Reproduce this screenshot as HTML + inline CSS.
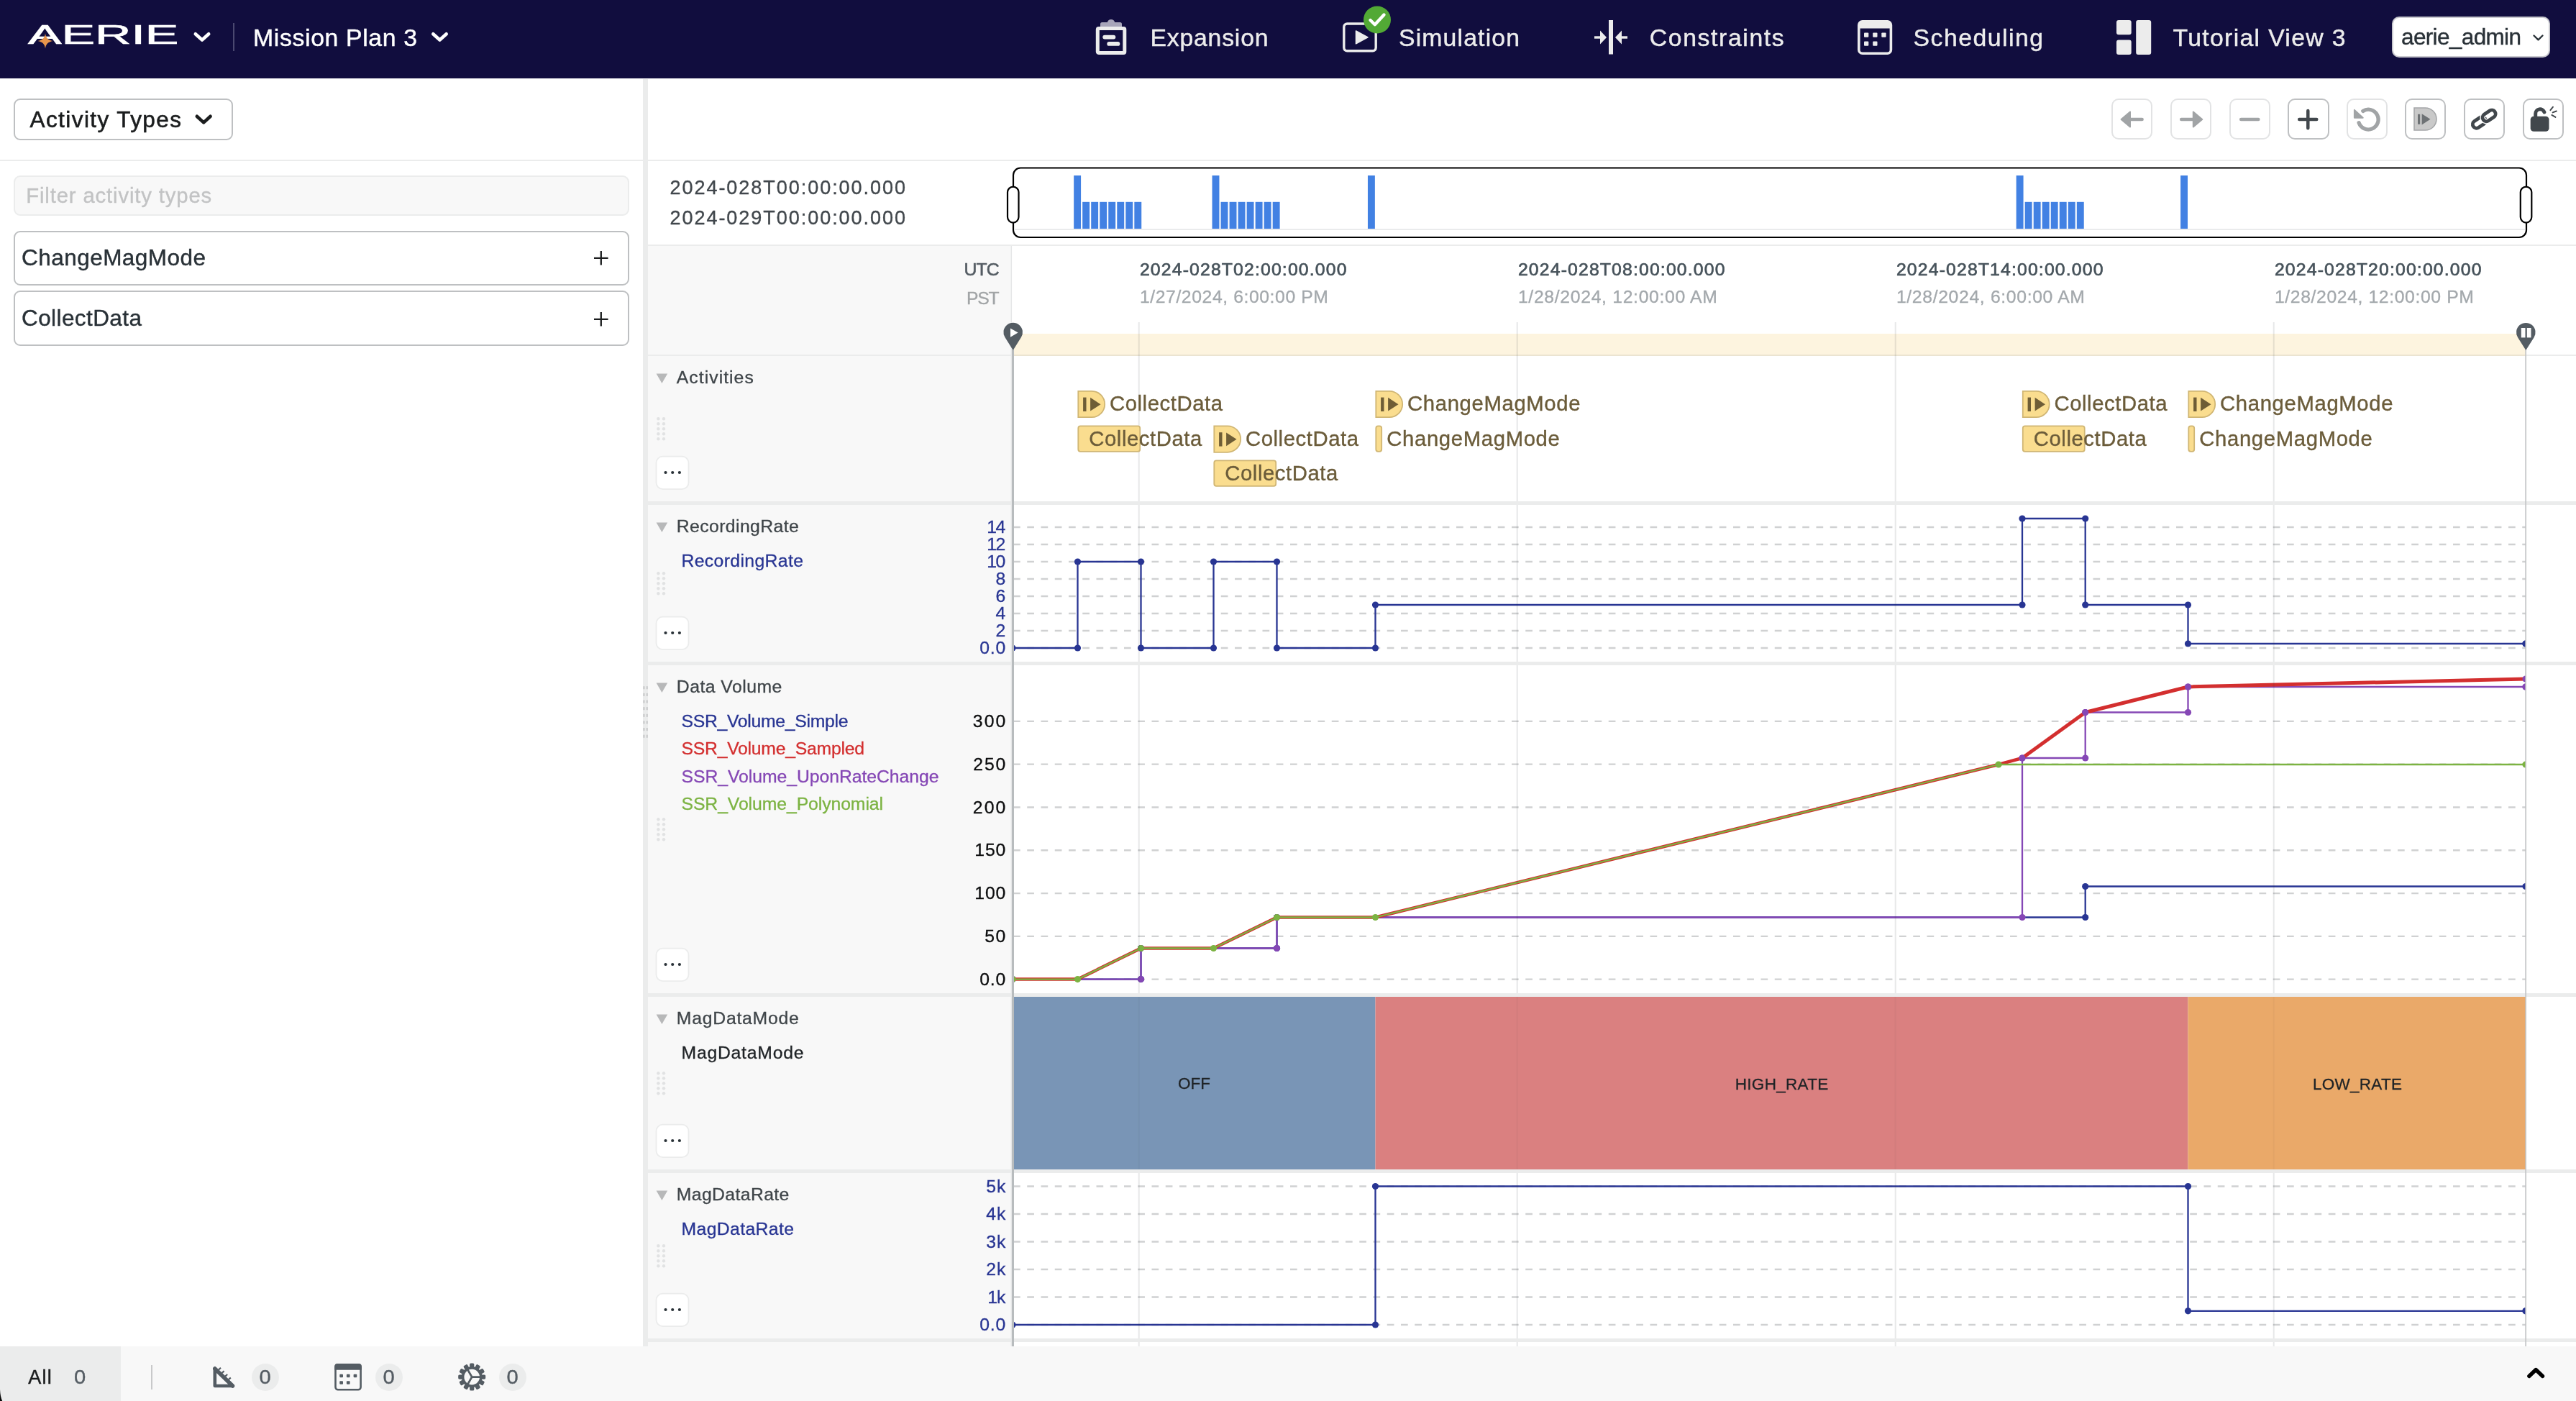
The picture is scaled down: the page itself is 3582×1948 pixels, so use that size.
<!DOCTYPE html><html lang="en"><head><meta charset="utf-8"><title>Aerie - Mission Plan 3</title><style>
*{box-sizing:border-box;margin:0;padding:0}
html,body{width:3582px;height:1948px;overflow:hidden;background:#fff}
body{font-family:"Liberation Sans",Arial,sans-serif;position:relative}
.t{position:absolute;white-space:nowrap;display:block}
.b{position:absolute;display:block}
svg{position:absolute;overflow:visible;display:block}
#app{position:absolute;left:0;top:0;width:3582px;height:1948px;will-change:transform}
</style></head><body><div id="app">
<header>
<div class="b" style="left:0px;top:0px;width:3582px;height:109px;background:#110d3e;"></div>
<span class="t" style="left:39px;top:25.5px;font-size:37.5px;line-height:44px;color:#fff;font-weight:400;-webkit-text-stroke:0.7px #fff;letter-spacing:0px;transform:scaleX(1.86);transform-origin:0 50%">AERIE</span>
<svg style="left:52px;top:46px" width="22" height="22" viewBox="0 0 22 22"><path d="M11 0.5 C11.8 6.5 14.5 9.6 21.5 11 C14.5 12.4 11.8 15.5 11 21.5 C10.2 15.5 7.5 12.4 0.5 11 C7.5 9.6 10.2 6.5 11 0.5Z" fill="#e8954c"/></svg>
<svg style="left:0;top:0" width="3582" height="120"><polyline points="271.8,47.3 281.0,55.5 290.2,47.3" fill="none" stroke="#fff" stroke-width="4.6" stroke-linecap="round" stroke-linejoin="round"/></svg>
<div class="b" style="left:324px;top:32px;width:2px;height:39px;background:#4b4970;"></div>
<span class="t" style="left:352.00px;top:31.81px;font-size:33.75px;line-height:40px;color:#fff;letter-spacing:0.655px;-webkit-text-stroke:0.44px #fff;">Mission Plan 3</span>
<svg style="left:0;top:0" width="3582" height="120"><polyline points="602.3,47.3 611.5,55.5 620.7,47.3" fill="none" stroke="#fff" stroke-width="4.6" stroke-linecap="round" stroke-linejoin="round"/></svg>
<svg style="left:1520px;top:24px" width="52" height="56" viewBox="1520 24 52 56">
<path d="M1530 37.5 V33.5 a2.5 2.5 0 0 1 2.5 -2.5 h7.5 a5 4 0 0 1 10 0 h7.5 a2.5 2.5 0 0 1 2.5 2.5 V37.5Z" fill="#a7a5b9"/>
<rect x="1526.3" y="39.5" width="37.5" height="34" rx="1.5" fill="none" stroke="#ececec" stroke-width="5"/>
<rect x="1533.3" y="48.7" width="18" height="5.8" rx="2.9" fill="#ececec"/>
<rect x="1539.3" y="58" width="18" height="5.8" rx="2.9" fill="#ececec"/>
</svg>
<span class="t" style="left:1599.50px;top:31.81px;font-size:33.75px;line-height:40px;color:#ececec;letter-spacing:0.798px;-webkit-text-stroke:0.44px #ececec;">Expansion</span>
<svg style="left:1860px;top:4px" width="80" height="76" viewBox="1860 4 80 76">
<rect x="1868.8" y="33" width="44.4" height="37.8" rx="4.5" fill="none" stroke="#ececec" stroke-width="3.4"/>
<path d="M1885.5 43 L1902 51.8 L1885.5 60.8Z" fill="#ececec" stroke="#ececec" stroke-width="1.5" stroke-linejoin="round"/>
<circle cx="1915" cy="27.5" r="19" fill="#52a935"/>
<polyline points="1905.5,28 1911.8,34.2 1924.5,20.5" fill="none" stroke="#fff" stroke-width="4.4" stroke-linecap="round" stroke-linejoin="round"/>
</svg>
<span class="t" style="left:1945.00px;top:31.81px;font-size:33.75px;line-height:40px;color:#ececec;letter-spacing:1.158px;-webkit-text-stroke:0.44px #ececec;">Simulation</span>
<svg style="left:2210px;top:24px" width="60" height="56" viewBox="2210 24 60 56">
<rect x="2237" y="28" width="6" height="47.5" fill="#ececec"/>
<rect x="2217" y="50.3" width="10" height="3.4" fill="#ececec"/>
<path d="M2225 42.5 L2234 52 L2225 61.5Z" fill="#ececec"/>
<rect x="2253" y="50.3" width="10" height="3.4" fill="#ececec"/>
<path d="M2255 42.5 L2246 52 L2255 61.5Z" fill="#ececec"/>
</svg>
<span class="t" style="left:2293.75px;top:31.81px;font-size:33.75px;line-height:40px;color:#ececec;letter-spacing:1.630px;-webkit-text-stroke:0.44px #ececec;">Constraints</span>
<svg style="left:2580px;top:24px" width="56" height="56" viewBox="2580 24 56 56">
<rect x="2584.8" y="29.8" width="44.6" height="44.4" rx="5" fill="none" stroke="#ececec" stroke-width="3.6"/>
<path d="M2584 39.5 V34 a5 5 0 0 1 5 -5 h36 a5 5 0 0 1 5 5 V39.5Z" fill="#ececec"/>
<g fill="#ececec"><rect x="2592" y="45.5" width="6.3" height="6.3" rx="1"/><rect x="2604.2" y="45.5" width="6.3" height="6.3" rx="1"/><rect x="2616.3" y="45.5" width="6.3" height="6.3" rx="1"/>
<rect x="2592" y="57.5" width="6.3" height="6.3" rx="1"/><rect x="2604.2" y="57.5" width="6.3" height="6.3" rx="1"/></g>
</svg>
<span class="t" style="left:2660.50px;top:31.81px;font-size:33.75px;line-height:40px;color:#ececec;letter-spacing:1.499px;-webkit-text-stroke:0.44px #ececec;">Scheduling</span>
<svg style="left:2940px;top:24px" width="56" height="56" viewBox="2940 24 56 56">
<g fill="#ececec"><rect x="2943" y="28" width="20.7" height="20.2" rx="3"/><rect x="2943" y="55.5" width="20.7" height="20.4" rx="3"/><rect x="2970.2" y="28" width="21" height="47.9" rx="3"/></g>
</svg>
<span class="t" style="left:3021.50px;top:31.81px;font-size:33.75px;line-height:40px;color:#ececec;letter-spacing:1.331px;-webkit-text-stroke:0.44px #ececec;">Tutorial View 3</span>
<div class="b" style="left:3326px;top:23px;width:220px;height:56.5px;background:#fff;border:2px solid #c9c9cf;border-radius:10px;"></div>
<span class="t" style="left:3339.00px;top:32.09px;font-size:31.5px;line-height:38px;color:#293137;letter-spacing:-0.636px;-webkit-text-stroke:0.41px #293137;">aerie_admin</span>
<svg style="left:0;top:0" width="3582" height="108"><polyline points="3523.5,49.5 3529.5,55.3 3535.5,49.5" fill="none" stroke="#293137" stroke-width="2.4" stroke-linecap="round" stroke-linejoin="round"/></svg>
</header>
<aside>
<div class="b" style="left:894px;top:110px;width:7px;height:1762px;background:#ebecec;"></div>
<svg style="left:0;top:0" width="910" height="1100"><rect x="894.1" y="954.20" width="2.6" height="4.1" fill="#cfd0d1"/><rect x="894.1" y="963.84" width="2.6" height="4.1" fill="#cfd0d1"/><rect x="894.1" y="973.48" width="2.6" height="4.1" fill="#cfd0d1"/><rect x="894.1" y="983.12" width="2.6" height="4.1" fill="#cfd0d1"/><rect x="894.1" y="992.76" width="2.6" height="4.1" fill="#cfd0d1"/><rect x="894.1" y="1002.40" width="2.6" height="4.1" fill="#cfd0d1"/><rect x="894.1" y="1012.04" width="2.6" height="4.1" fill="#cfd0d1"/><rect x="894.1" y="1021.68" width="2.6" height="4.1" fill="#cfd0d1"/><rect x="898.4" y="954.20" width="2.6" height="4.1" fill="#cfd0d1"/><rect x="898.4" y="963.84" width="2.6" height="4.1" fill="#cfd0d1"/><rect x="898.4" y="973.48" width="2.6" height="4.1" fill="#cfd0d1"/><rect x="898.4" y="983.12" width="2.6" height="4.1" fill="#cfd0d1"/><rect x="898.4" y="992.76" width="2.6" height="4.1" fill="#cfd0d1"/><rect x="898.4" y="1002.40" width="2.6" height="4.1" fill="#cfd0d1"/><rect x="898.4" y="1012.04" width="2.6" height="4.1" fill="#cfd0d1"/><rect x="898.4" y="1021.68" width="2.6" height="4.1" fill="#cfd0d1"/></svg>
<div class="b" style="left:19px;top:137px;width:305px;height:57.5px;background:#fff;border:2px solid #bec0c2;border-radius:9px;"></div>
<span class="t" style="left:41.50px;top:146.89px;font-size:31.5px;line-height:38px;color:#1b1d1e;letter-spacing:1.424px;-webkit-text-stroke:0.6px #1b1d1e;">Activity Types</span>
<svg style="left:0;top:0" width="400" height="220"><polyline points="273.8,161.8 283.2,170.4 292.6,161.8" fill="none" stroke="#1b1d1e" stroke-width="4.6" stroke-linecap="round" stroke-linejoin="round"/></svg>
<div class="b" style="left:0px;top:222px;width:894px;height:2px;background:#ebecec;"></div>
<div class="b" style="left:19px;top:244px;width:855.5px;height:55.5px;background:#f8f8f8;border:2px solid #ebecec;border-radius:9px;"></div>
<span class="t" style="left:36.20px;top:254.96px;font-size:29.25px;line-height:35px;color:#c2c3c4;letter-spacing:0.872px;-webkit-text-stroke:0.38px #c2c3c4;">Filter activity types</span>
<div class="b" style="left:19px;top:320.5px;width:855.5px;height:76.0px;background:#fff;border:2px solid #bec0c2;border-radius:9px;"></div>
<span class="t" style="left:30.00px;top:338.99px;font-size:31.5px;line-height:38px;color:#293137;letter-spacing:0.465px;-webkit-text-stroke:0.41px #293137;">ChangeMagMode</span>
<div class="b" style="left:19px;top:404px;width:855.5px;height:76.5px;background:#fff;border:2px solid #bec0c2;border-radius:9px;"></div>
<span class="t" style="left:30.00px;top:423.49px;font-size:31.5px;line-height:38px;color:#293137;letter-spacing:0.417px;-webkit-text-stroke:0.41px #293137;">CollectData</span>
<svg style="left:823.9000000000001px;top:346.5px" width="23.6" height="23.6" viewBox="823.9000000000001 346.5 23.6 23.6"><path d="M825.9000000000001 358.3H845.5M835.7 348.5V368.1" stroke="#1b1d1e" stroke-width="2.3" fill="none"/></svg>
<svg style="left:823.9000000000001px;top:431.5px" width="23.6" height="23.6" viewBox="823.9000000000001 431.5 23.6 23.6"><path d="M825.9000000000001 443.3H845.5M835.7 433.5V453.1" stroke="#1b1d1e" stroke-width="2.3" fill="none"/></svg>
</aside>
<main>
<div class="b" style="left:2936.3px;top:137px;width:57.19999999999982px;height:57.400000000000006px;background:#fff;border:2px solid #e2e3e4;border-radius:10px;"></div>
<div class="b" style="left:3018px;top:137px;width:57.19999999999982px;height:57.400000000000006px;background:#fff;border:2px solid #e2e3e4;border-radius:10px;"></div>
<div class="b" style="left:3099.6px;top:137px;width:57.19999999999982px;height:57.400000000000006px;background:#fff;border:2px solid #e2e3e4;border-radius:10px;"></div>
<div class="b" style="left:3181.4px;top:137px;width:57.19999999999982px;height:57.400000000000006px;background:#fff;border:2px solid #bec0c2;border-radius:10px;"></div>
<div class="b" style="left:3262.7px;top:137px;width:57.19999999999982px;height:57.400000000000006px;background:#fff;border:2px solid #e2e3e4;border-radius:10px;"></div>
<div class="b" style="left:3344.3px;top:137px;width:57.19999999999982px;height:57.400000000000006px;background:#fff;border:2px solid #bec0c2;border-radius:10px;"></div>
<div class="b" style="left:3426.2px;top:137px;width:57.19999999999982px;height:57.400000000000006px;background:#fff;border:2px solid #bec0c2;border-radius:10px;"></div>
<div class="b" style="left:3507.5px;top:137px;width:57.19999999999982px;height:57.400000000000006px;background:#fff;border:2px solid #bec0c2;border-radius:10px;"></div>
<svg style="left:0;top:0" width="3582" height="220"><path d="M2961 163.8 H2978.6 a2.2 2.2 0 0 1 0 4.5 H2961Z" fill="#a1a4a6"/><path d="M2962 155.5 V176.5 L2949.6 166Z" fill="#a1a4a6" stroke="#a1a4a6" stroke-width="2" stroke-linejoin="round"/><path d="M3050.8 163.8 H3033.2 a2.2 2.2 0 0 0 0 4.5 H3050.8Z" fill="#a1a4a6"/><path d="M3049.8 155.5 V176.5 L3062.2 166Z" fill="#a1a4a6" stroke="#a1a4a6" stroke-width="2" stroke-linejoin="round"/><path d="M3116.2 166 H3140.3" stroke="#a1a4a6" stroke-width="4.5" stroke-linecap="round"/><path d="M3197.2 166 H3221.3 M3209.3 154 V178.3" stroke="#41474c" stroke-width="4.5" stroke-linecap="round"/><path d="M3280.1 170.7 A13.9 13.9 0 1 0 3285.8 154.4" fill="none" stroke="#a1a4a6" stroke-width="5.3" stroke-linecap="round"/><path d="M3273.9 152.9 V163.8 H3285.7Z" fill="#a1a4a6" stroke="#a1a4a6" stroke-width="2" stroke-linejoin="round"/><path d="M3357 150 H3372.5 a15.5 15.5 0 0 1 0 31 H3357Z" fill="#c9c9c9" stroke="#a5a7a9" stroke-width="1.6"/><rect x="3362" y="158.8" width="3.2" height="14" fill="#6e7275"/><path d="M3367.6 158.2 L3379.5 165.8 L3367.6 173.4Z" fill="#6e7275"/><rect x="3437.60" y="165.10" width="19.6" height="10.6" rx="5.3" fill="none" stroke="#41474c" stroke-width="4.8" transform="rotate(-34 3447.4 170.4)"/><rect x="3451.30" y="155.60" width="19.6" height="10.6" rx="5.3" fill="none" stroke="#fff" stroke-width="7.6" transform="rotate(-34 3461.1 160.9)"/><rect x="3451.30" y="155.60" width="19.6" height="10.6" rx="5.3" fill="none" stroke="#41474c" stroke-width="4.8" transform="rotate(-34 3461.1 160.9)"/><rect x="3518.7" y="161.7" width="25.8" height="21.1" rx="4.6" fill="#41474c"/><path d="M3525.7 163 V158.1 A6.3 6.3 0 0 1 3537.9 155.9" fill="none" stroke="#41474c" stroke-width="5" stroke-linecap="round"/><path d="M3546.4 153.2 L3550 148.7 M3549.6 156.4 L3554.8 154.5 M3548.3 159.9 L3553.5 162.9" stroke="#41474c" stroke-width="1.9" stroke-linecap="round"/></svg>
<div class="b" style="left:901px;top:222px;width:2681px;height:2px;background:#ebecec;"></div>
<span class="t" style="left:931.50px;top:245.04px;font-size:27px;line-height:32px;color:#41474c;letter-spacing:1.962px;-webkit-text-stroke:0.35px #41474c;">2024-028T00:00:00.000</span>
<span class="t" style="left:931.50px;top:287.24px;font-size:27px;line-height:32px;color:#41474c;letter-spacing:1.962px;-webkit-text-stroke:0.35px #41474c;">2024-029T00:00:00.000</span>
<svg style="left:0;top:0" width="3582" height="345"><rect x="1409" y="233.5" width="2104" height="96.5" rx="10" fill="#fff" stroke="#000" stroke-width="2.2"/><rect x="1411" y="318.3" width="2100" height="1.6" fill="#e6e7e8"/><rect x="1493.16" y="244" width="9.92" height="74" fill="#4281e3"/><rect x="1505.18" y="280.8" width="9.92" height="37.19999999999999" fill="#4281e3"/><rect x="1517.21" y="280.8" width="9.92" height="37.19999999999999" fill="#4281e3"/><rect x="1529.23" y="280.8" width="9.92" height="37.19999999999999" fill="#4281e3"/><rect x="1541.25" y="280.8" width="9.92" height="37.19999999999999" fill="#4281e3"/><rect x="1553.27" y="280.8" width="9.92" height="37.19999999999999" fill="#4281e3"/><rect x="1565.30" y="280.8" width="9.92" height="37.19999999999999" fill="#4281e3"/><rect x="1577.32" y="280.8" width="9.92" height="37.19999999999999" fill="#4281e3"/><rect x="1685.53" y="244" width="9.92" height="74" fill="#4281e3"/><rect x="1697.55" y="280.8" width="9.92" height="37.19999999999999" fill="#4281e3"/><rect x="1709.57" y="280.8" width="9.92" height="37.19999999999999" fill="#4281e3"/><rect x="1721.59" y="280.8" width="9.92" height="37.19999999999999" fill="#4281e3"/><rect x="1733.62" y="280.8" width="9.92" height="37.19999999999999" fill="#4281e3"/><rect x="1745.64" y="280.8" width="9.92" height="37.19999999999999" fill="#4281e3"/><rect x="1757.66" y="280.8" width="9.92" height="37.19999999999999" fill="#4281e3"/><rect x="1769.69" y="280.8" width="9.92" height="37.19999999999999" fill="#4281e3"/><rect x="1901.94" y="244" width="9.92" height="74" fill="#4281e3"/><rect x="2803.65" y="244" width="9.92" height="74" fill="#4281e3"/><rect x="2815.67" y="280.8" width="9.92" height="37.19999999999999" fill="#4281e3"/><rect x="2827.70" y="280.8" width="9.92" height="37.19999999999999" fill="#4281e3"/><rect x="2839.72" y="280.8" width="9.92" height="37.19999999999999" fill="#4281e3"/><rect x="2851.74" y="280.8" width="9.92" height="37.19999999999999" fill="#4281e3"/><rect x="2863.77" y="280.8" width="9.92" height="37.19999999999999" fill="#4281e3"/><rect x="2875.79" y="280.8" width="9.92" height="37.19999999999999" fill="#4281e3"/><rect x="2887.81" y="280.8" width="9.92" height="37.19999999999999" fill="#4281e3"/><rect x="3032.09" y="244" width="9.92" height="74" fill="#4281e3"/><rect x="1401" y="259.6" width="15.5" height="50" rx="7.75" fill="#fff" stroke="#000" stroke-width="2.2"/><rect x="3504.8" y="259.6" width="15.5" height="50" rx="7.75" fill="#fff" stroke="#000" stroke-width="2.2"/></svg>
<div class="b" style="left:901px;top:340px;width:2681px;height:2px;background:#ebecec;"></div>
</main>
<svg style="left:0;top:0" width="3582" height="1872" viewBox="0 0 3582 1872" font-family="Liberation Sans, Arial, sans-serif"><rect x="901" y="342" width="504.5" height="1530" fill="#f8f8f8"/>
<text x="1389.50" y="383.30" font-size="24.75" fill="#545c63" stroke="#545c63" stroke-width="0.60" textLength="49.0" lengthAdjust="spacing" text-anchor="end">UTC</text>
<text x="1389.50" y="422.60" font-size="24.75" fill="#a1a4a6" stroke="#a1a4a6" stroke-width="0.32" textLength="45.5" lengthAdjust="spacing" text-anchor="end">PST</text>
<rect x="1408" y="464" width="2104" height="30" fill="#fdf4df"/>
<rect x="901" y="493" width="2681" height="2" fill="#ebecec"/>
<rect x="1408" y="493" width="2104" height="2" fill="#ebe4d1"/>
<text x="1584.93" y="383.10" font-size="24.75" fill="#46525a" stroke="#46525a" stroke-width="0.70" textLength="287.5" lengthAdjust="spacing">2024-028T02:00:00.000</text>
<text x="1584.93" y="421.00" font-size="24.75" fill="#a3a8ac" stroke="#a3a8ac" stroke-width="0.32" textLength="262.0" lengthAdjust="spacing">1/27/2024, 6:00:00 PM</text>
<text x="2110.93" y="383.10" font-size="24.75" fill="#46525a" stroke="#46525a" stroke-width="0.70" textLength="287.5" lengthAdjust="spacing">2024-028T08:00:00.000</text>
<text x="2110.93" y="421.00" font-size="24.75" fill="#a3a8ac" stroke="#a3a8ac" stroke-width="0.32" textLength="277.0" lengthAdjust="spacing">1/28/2024, 12:00:00 AM</text>
<text x="2636.93" y="383.10" font-size="24.75" fill="#46525a" stroke="#46525a" stroke-width="0.70" textLength="287.5" lengthAdjust="spacing">2024-028T14:00:00.000</text>
<text x="2636.93" y="421.00" font-size="24.75" fill="#a3a8ac" stroke="#a3a8ac" stroke-width="0.32" textLength="262.0" lengthAdjust="spacing">1/28/2024, 6:00:00 AM</text>
<text x="3162.93" y="383.10" font-size="24.75" fill="#46525a" stroke="#46525a" stroke-width="0.70" textLength="287.5" lengthAdjust="spacing">2024-028T20:00:00.000</text>
<text x="3162.93" y="421.00" font-size="24.75" fill="#a3a8ac" stroke="#a3a8ac" stroke-width="0.32" textLength="277.0" lengthAdjust="spacing">1/28/2024, 12:00:00 PM</text>
<clipPath id="cp"><rect x="1408" y="495" width="2105" height="1377"/></clipPath>
<g clip-path="url(#cp)">
<line x1="1409" y1="733.00" x2="3512" y2="733.00" stroke="#d0d1d2" stroke-width="2.3" stroke-dasharray="9.7 9.55"/>
<line x1="1409" y1="757.00" x2="3512" y2="757.00" stroke="#d0d1d2" stroke-width="2.3" stroke-dasharray="9.7 9.55"/>
<line x1="1409" y1="781.00" x2="3512" y2="781.00" stroke="#d0d1d2" stroke-width="2.3" stroke-dasharray="9.7 9.55"/>
<line x1="1409" y1="805.00" x2="3512" y2="805.00" stroke="#d0d1d2" stroke-width="2.3" stroke-dasharray="9.7 9.55"/>
<line x1="1409" y1="829.00" x2="3512" y2="829.00" stroke="#d0d1d2" stroke-width="2.3" stroke-dasharray="9.7 9.55"/>
<line x1="1409" y1="853.00" x2="3512" y2="853.00" stroke="#d0d1d2" stroke-width="2.3" stroke-dasharray="9.7 9.55"/>
<line x1="1409" y1="877.00" x2="3512" y2="877.00" stroke="#d0d1d2" stroke-width="2.3" stroke-dasharray="9.7 9.55"/>
<line x1="1409" y1="901.00" x2="3512" y2="901.00" stroke="#d0d1d2" stroke-width="2.3" stroke-dasharray="9.7 9.55"/>
<polyline points="1408.0,901.0 1498.5,901.0 1498.5,781.0 1586.5,781.0 1586.5,901.0 1687.5,901.0 1687.5,781.0 1775.5,781.0 1775.5,901.0 1912.5,901.0 1912.5,841.0 2812.0,841.0 2812.0,721.0 2899.7,721.0 2899.7,841.0 3042.5,841.0 3042.5,895.0 3512.0,895.0 3512.0,895.0" fill="none" stroke="#283593" stroke-width="2.3" stroke-linejoin="round"/><circle cx="1408.0" cy="901.0" r="4.6" fill="#283593"/><circle cx="1498.5" cy="901.0" r="4.6" fill="#283593"/><circle cx="1498.5" cy="781.0" r="4.6" fill="#283593"/><circle cx="1586.5" cy="781.0" r="4.6" fill="#283593"/><circle cx="1586.5" cy="901.0" r="4.6" fill="#283593"/><circle cx="1687.5" cy="901.0" r="4.6" fill="#283593"/><circle cx="1687.5" cy="781.0" r="4.6" fill="#283593"/><circle cx="1775.5" cy="781.0" r="4.6" fill="#283593"/><circle cx="1775.5" cy="901.0" r="4.6" fill="#283593"/><circle cx="1912.5" cy="901.0" r="4.6" fill="#283593"/><circle cx="1912.5" cy="841.0" r="4.6" fill="#283593"/><circle cx="2812.0" cy="841.0" r="4.6" fill="#283593"/><circle cx="2812.0" cy="721.0" r="4.6" fill="#283593"/><circle cx="2899.7" cy="721.0" r="4.6" fill="#283593"/><circle cx="2899.7" cy="841.0" r="4.6" fill="#283593"/><circle cx="3042.5" cy="841.0" r="4.6" fill="#283593"/><circle cx="3042.5" cy="895.0" r="4.6" fill="#283593"/><circle cx="3512.0" cy="895.0" r="4.6" fill="#283593"/><circle cx="3512.0" cy="895.0" r="4.6" fill="#283593"/>
<line x1="1409" y1="1002.95" x2="3512" y2="1002.95" stroke="#d0d1d2" stroke-width="2.3" stroke-dasharray="9.7 9.55"/>
<line x1="1409" y1="1062.72" x2="3512" y2="1062.72" stroke="#d0d1d2" stroke-width="2.3" stroke-dasharray="9.7 9.55"/>
<line x1="1409" y1="1122.50" x2="3512" y2="1122.50" stroke="#d0d1d2" stroke-width="2.3" stroke-dasharray="9.7 9.55"/>
<line x1="1409" y1="1182.27" x2="3512" y2="1182.27" stroke="#d0d1d2" stroke-width="2.3" stroke-dasharray="9.7 9.55"/>
<line x1="1409" y1="1242.05" x2="3512" y2="1242.05" stroke="#d0d1d2" stroke-width="2.3" stroke-dasharray="9.7 9.55"/>
<line x1="1409" y1="1301.82" x2="3512" y2="1301.82" stroke="#d0d1d2" stroke-width="2.3" stroke-dasharray="9.7 9.55"/>
<line x1="1409" y1="1361.60" x2="3512" y2="1361.60" stroke="#d0d1d2" stroke-width="2.3" stroke-dasharray="9.7 9.55"/>
<polyline points="1408.0,1361.6 1586.5,1361.6 1586.5,1318.5 1775.5,1318.5 1775.5,1275.5 2899.7,1275.5 2899.7,1232.5 3512.0,1232.5" fill="none" stroke="#283593" stroke-width="2.3" stroke-linejoin="round"/><circle cx="1408.0" cy="1361.6" r="4.6" fill="#283593"/><circle cx="1586.5" cy="1361.6" r="4.6" fill="#283593"/><circle cx="1586.5" cy="1318.5" r="4.6" fill="#283593"/><circle cx="1775.5" cy="1318.5" r="4.6" fill="#283593"/><circle cx="1775.5" cy="1275.5" r="4.6" fill="#283593"/><circle cx="2899.7" cy="1275.5" r="4.6" fill="#283593"/><circle cx="2899.7" cy="1232.5" r="4.6" fill="#283593"/><circle cx="3512.0" cy="1232.5" r="4.6" fill="#283593"/>
<polyline points="1408.0,1361.6 1586.5,1361.6 1586.5,1318.5 1775.5,1318.5 1775.5,1275.5 2812.0,1275.5 2812.0,1054.0 2899.7,1054.0 2899.7,990.5 3042.5,990.5 3042.5,955.0 3512.0,955.0" fill="none" stroke="#8547b5" stroke-width="2.3" stroke-linejoin="round"/><circle cx="1408.0" cy="1361.6" r="4.6" fill="#8547b5"/><circle cx="1586.5" cy="1361.6" r="4.6" fill="#8547b5"/><circle cx="1586.5" cy="1318.5" r="4.6" fill="#8547b5"/><circle cx="1775.5" cy="1318.5" r="4.6" fill="#8547b5"/><circle cx="1775.5" cy="1275.5" r="4.6" fill="#8547b5"/><circle cx="2812.0" cy="1275.5" r="4.6" fill="#8547b5"/><circle cx="2812.0" cy="1054.0" r="4.6" fill="#8547b5"/><circle cx="2899.7" cy="1054.0" r="4.6" fill="#8547b5"/><circle cx="2899.7" cy="990.5" r="4.6" fill="#8547b5"/><circle cx="3042.5" cy="990.5" r="4.6" fill="#8547b5"/><circle cx="3042.5" cy="955.0" r="4.6" fill="#8547b5"/><circle cx="3512.0" cy="955.0" r="4.6" fill="#8547b5"/>
<polyline points="1408.0,1361.6 1498.5,1361.6 1586.5,1318.5 1687.5,1318.5 1775.5,1275.5 1912.5,1275.5 2779.0,1063.0 2812.0,1054.0" fill="none" stroke="#d32f2f" stroke-width="4.5" stroke-linejoin="round"/>
<polyline points="2812.0,1054.0 2899.7,990.5 3042.5,955.0 3512.0,944.0" fill="none" stroke="#d32f2f" stroke-width="5" stroke-linejoin="round"/>
<polyline points="1408.0,1361.6 1498.5,1361.6 1586.5,1318.5 1687.5,1318.5 1775.5,1275.5 1912.5,1275.5 2779.0,1063.0 3512.0,1063.0" fill="none" stroke="#7cb342" stroke-width="2.3" stroke-linejoin="round"/><circle cx="1408.0" cy="1361.6" r="4.6" fill="#7cb342"/><circle cx="1498.5" cy="1361.6" r="4.6" fill="#7cb342"/><circle cx="1586.5" cy="1318.5" r="4.6" fill="#7cb342"/><circle cx="1687.5" cy="1318.5" r="4.6" fill="#7cb342"/><circle cx="1775.5" cy="1275.5" r="4.6" fill="#7cb342"/><circle cx="1912.5" cy="1275.5" r="4.6" fill="#7cb342"/><circle cx="2779.0" cy="1063.0" r="4.6" fill="#7cb342"/><circle cx="3512.0" cy="1063.0" r="4.6" fill="#7cb342"/>
<circle cx="2812.0" cy="1054.0" r="4.6" fill="#8547b5"/>
<circle cx="2899.7" cy="990.5" r="4.6" fill="#8547b5"/>
<circle cx="3042.5" cy="955.0" r="4.6" fill="#8547b5"/>
<circle cx="3512.0" cy="955.0" r="4.6" fill="#8547b5"/>
<circle cx="3512.0" cy="944.0" r="4.6" fill="#8547b5"/>
<rect x="1408" y="1386" width="504.5" height="240" fill="#7995b6"/>
<rect x="1912.5" y="1386" width="1130.0" height="240" fill="#da8080"/>
<rect x="3042.5" y="1386" width="470.0" height="240" fill="#eaa969"/>
<line x1="1409" y1="1649.50" x2="3512" y2="1649.50" stroke="#d0d1d2" stroke-width="2.3" stroke-dasharray="9.7 9.55"/>
<line x1="1409" y1="1688.00" x2="3512" y2="1688.00" stroke="#d0d1d2" stroke-width="2.3" stroke-dasharray="9.7 9.55"/>
<line x1="1409" y1="1726.50" x2="3512" y2="1726.50" stroke="#d0d1d2" stroke-width="2.3" stroke-dasharray="9.7 9.55"/>
<line x1="1409" y1="1765.00" x2="3512" y2="1765.00" stroke="#d0d1d2" stroke-width="2.3" stroke-dasharray="9.7 9.55"/>
<line x1="1409" y1="1803.50" x2="3512" y2="1803.50" stroke="#d0d1d2" stroke-width="2.3" stroke-dasharray="9.7 9.55"/>
<line x1="1409" y1="1842.00" x2="3512" y2="1842.00" stroke="#d0d1d2" stroke-width="2.3" stroke-dasharray="9.7 9.55"/>
<polyline points="1408.0,1842.0 1912.5,1842.0 1912.5,1649.5 3042.5,1649.5 3042.5,1822.8 3512.0,1822.8 3512.0,1822.8" fill="none" stroke="#283593" stroke-width="2.3" stroke-linejoin="round"/><circle cx="1408.0" cy="1842.0" r="4.6" fill="#283593"/><circle cx="1912.5" cy="1842.0" r="4.6" fill="#283593"/><circle cx="1912.5" cy="1649.5" r="4.6" fill="#283593"/><circle cx="3042.5" cy="1649.5" r="4.6" fill="#283593"/><circle cx="3042.5" cy="1822.8" r="4.6" fill="#283593"/><circle cx="3512.0" cy="1822.8" r="4.6" fill="#283593"/><circle cx="3512.0" cy="1822.8" r="4.6" fill="#283593"/>
</g>
<text x="1660.50" y="1514.20" font-size="22.5" fill="#1f2326" stroke="#1f2326" stroke-width="0.29" textLength="45.0" lengthAdjust="spacing" text-anchor="middle" font-family="Liberation Sans">OFF</text>
<text x="2477.50" y="1515.00" font-size="22.5" fill="#1f2326" stroke="#1f2326" stroke-width="0.29" textLength="129.5" lengthAdjust="spacing" text-anchor="middle">HIGH_RATE</text>
<text x="3278.00" y="1515.00" font-size="22.5" fill="#1f2326" stroke="#1f2326" stroke-width="0.29" textLength="124.0" lengthAdjust="spacing" text-anchor="middle">LOW_RATE</text>
<rect x="1582.7" y="448" width="2" height="938" fill="rgba(40,50,60,0.115)"/>
<rect x="1582.7" y="1386" width="2" height="240" fill="rgba(40,50,60,0.04)"/>
<rect x="1582.7" y="1626" width="2" height="246" fill="rgba(40,50,60,0.115)"/>
<rect x="2108.7" y="448" width="2" height="938" fill="rgba(40,50,60,0.115)"/>
<rect x="2108.7" y="1386" width="2" height="240" fill="rgba(40,50,60,0.04)"/>
<rect x="2108.7" y="1626" width="2" height="246" fill="rgba(40,50,60,0.115)"/>
<rect x="2634.7" y="448" width="2" height="938" fill="rgba(40,50,60,0.115)"/>
<rect x="2634.7" y="1386" width="2" height="240" fill="rgba(40,50,60,0.04)"/>
<rect x="2634.7" y="1626" width="2" height="246" fill="rgba(40,50,60,0.115)"/>
<rect x="3160.7" y="448" width="2" height="938" fill="rgba(40,50,60,0.115)"/>
<rect x="3160.7" y="1386" width="2" height="240" fill="rgba(40,50,60,0.04)"/>
<rect x="3160.7" y="1626" width="2" height="246" fill="rgba(40,50,60,0.115)"/>
<path d="M1499.3 543.8 H1518.0 a18.2 18.2 0 0 1 0 36.4 H1499.3Z" fill="#fadd8f" stroke="#d0b674" stroke-width="1.8"/><rect x="1506.1" y="552.6" width="4.4" height="19.4" fill="#6e5d36"/><path d="M1516.1 552.8 L1530.5 562.2 L1516.1 571.6Z" fill="#6e5d36"/><text x="1543.00" y="571.40" font-size="29.25" fill="#6b5c3a" stroke="#6b5c3a" stroke-width="0.38" textLength="157.0" lengthAdjust="spacing">CollectData</text>
<rect x="1499.3" y="592.4" width="85.9" height="35.4" rx="3" fill="#fadd8f" stroke="#d0b674" stroke-width="1.8"/><text x="1514.30" y="619.50" font-size="29.25" fill="#6b5c3a" stroke="#6b5c3a" stroke-width="0.38" textLength="157.0" lengthAdjust="spacing">CollectData</text>
<path d="M1688.3 592.4 H1707.0 a18.2 18.2 0 0 1 0 36.4 H1688.3Z" fill="#fadd8f" stroke="#d0b674" stroke-width="1.8"/><rect x="1695.1" y="601.2" width="4.4" height="19.4" fill="#6e5d36"/><path d="M1705.1 601.4 L1719.5 610.8 L1705.1 620.2Z" fill="#6e5d36"/><text x="1732.00" y="620.00" font-size="29.25" fill="#6b5c3a" stroke="#6b5c3a" stroke-width="0.38" textLength="157.0" lengthAdjust="spacing">CollectData</text>
<rect x="1688.3" y="640.4" width="85.9" height="35.4" rx="3" fill="#fadd8f" stroke="#d0b674" stroke-width="1.8"/><text x="1703.30" y="667.50" font-size="29.25" fill="#6b5c3a" stroke="#6b5c3a" stroke-width="0.38" textLength="157.0" lengthAdjust="spacing">CollectData</text>
<path d="M1913.3 543.8 H1932.0 a18.2 18.2 0 0 1 0 36.4 H1913.3Z" fill="#fadd8f" stroke="#d0b674" stroke-width="1.8"/><rect x="1920.1" y="552.6" width="4.4" height="19.4" fill="#6e5d36"/><path d="M1930.1 552.8 L1944.5 562.2 L1930.1 571.6Z" fill="#6e5d36"/><text x="1957.00" y="571.40" font-size="29.25" fill="#6b5c3a" stroke="#6b5c3a" stroke-width="0.38" textLength="240.5" lengthAdjust="spacing">ChangeMagMode</text>
<rect x="1913.3" y="592.4" width="7.9" height="35.4" rx="3" fill="#fadd8f" stroke="#d0b674" stroke-width="1.8"/><text x="1928.30" y="619.50" font-size="29.25" fill="#6b5c3a" stroke="#6b5c3a" stroke-width="0.38" textLength="240.5" lengthAdjust="spacing">ChangeMagMode</text>
<path d="M2812.8 543.8 H2831.5 a18.2 18.2 0 0 1 0 36.4 H2812.8Z" fill="#fadd8f" stroke="#d0b674" stroke-width="1.8"/><rect x="2819.6" y="552.6" width="4.4" height="19.4" fill="#6e5d36"/><path d="M2829.6 552.8 L2844.0 562.2 L2829.6 571.6Z" fill="#6e5d36"/><text x="2856.50" y="571.40" font-size="29.25" fill="#6b5c3a" stroke="#6b5c3a" stroke-width="0.38" textLength="157.0" lengthAdjust="spacing">CollectData</text>
<rect x="2812.8" y="592.4" width="85.9" height="35.4" rx="3" fill="#fadd8f" stroke="#d0b674" stroke-width="1.8"/><text x="2827.80" y="619.50" font-size="29.25" fill="#6b5c3a" stroke="#6b5c3a" stroke-width="0.38" textLength="157.0" lengthAdjust="spacing">CollectData</text>
<path d="M3043.3 543.8 H3062.0 a18.2 18.2 0 0 1 0 36.4 H3043.3Z" fill="#fadd8f" stroke="#d0b674" stroke-width="1.8"/><rect x="3050.1" y="552.6" width="4.4" height="19.4" fill="#6e5d36"/><path d="M3060.1 552.8 L3074.5 562.2 L3060.1 571.6Z" fill="#6e5d36"/><text x="3087.00" y="571.40" font-size="29.25" fill="#6b5c3a" stroke="#6b5c3a" stroke-width="0.38" textLength="240.5" lengthAdjust="spacing">ChangeMagMode</text>
<rect x="3043.3" y="592.4" width="7.9" height="35.4" rx="3" fill="#fadd8f" stroke="#d0b674" stroke-width="1.8"/><text x="3058.30" y="619.50" font-size="29.25" fill="#6b5c3a" stroke="#6b5c3a" stroke-width="0.38" textLength="240.5" lengthAdjust="spacing">ChangeMagMode</text>
<path d="M912.6 519.4 h15.6 l-7.8 13.6Z" fill="#b7b8b9"/>
<text x="940.80" y="533.00" font-size="24.75" fill="#3f4549" stroke="#3f4549" stroke-width="0.32" textLength="107.0" lengthAdjust="spacing">Activities</text>
<circle cx="915.4" cy="582.3" r="2.2" fill="#e1e2e3"/><circle cx="923.0" cy="582.3" r="2.2" fill="#e1e2e3"/><circle cx="915.4" cy="589.3" r="2.2" fill="#e1e2e3"/><circle cx="923.0" cy="589.3" r="2.2" fill="#e1e2e3"/><circle cx="915.4" cy="596.3" r="2.2" fill="#e1e2e3"/><circle cx="923.0" cy="596.3" r="2.2" fill="#e1e2e3"/><circle cx="915.4" cy="603.3" r="2.2" fill="#e1e2e3"/><circle cx="923.0" cy="603.3" r="2.2" fill="#e1e2e3"/><circle cx="915.4" cy="610.3" r="2.2" fill="#e1e2e3"/><circle cx="923.0" cy="610.3" r="2.2" fill="#e1e2e3"/>
<rect x="912.5" y="634.7" width="45" height="45.4" rx="9" fill="#fff" stroke="#ebecec" stroke-width="1.8"/>
<circle cx="925.5" cy="657" r="2.1" fill="#293137"/><circle cx="935.2" cy="657" r="2.1" fill="#293137"/><circle cx="944.9" cy="657" r="2.1" fill="#293137"/>
<rect x="901" y="697" width="2681" height="5" fill="#ebecec"/>
<path d="M912.6 726.4 h15.6 l-7.8 13.6Z" fill="#b7b8b9"/>
<text x="940.80" y="740.00" font-size="24.75" fill="#3f4549" stroke="#3f4549" stroke-width="0.32" textLength="170.0" lengthAdjust="spacing">RecordingRate</text>
<circle cx="915.4" cy="797.3" r="2.2" fill="#e1e2e3"/><circle cx="923.0" cy="797.3" r="2.2" fill="#e1e2e3"/><circle cx="915.4" cy="804.3" r="2.2" fill="#e1e2e3"/><circle cx="923.0" cy="804.3" r="2.2" fill="#e1e2e3"/><circle cx="915.4" cy="811.3" r="2.2" fill="#e1e2e3"/><circle cx="923.0" cy="811.3" r="2.2" fill="#e1e2e3"/><circle cx="915.4" cy="818.3" r="2.2" fill="#e1e2e3"/><circle cx="923.0" cy="818.3" r="2.2" fill="#e1e2e3"/><circle cx="915.4" cy="825.3" r="2.2" fill="#e1e2e3"/><circle cx="923.0" cy="825.3" r="2.2" fill="#e1e2e3"/>
<rect x="912.5" y="857.7" width="45" height="45.4" rx="9" fill="#fff" stroke="#ebecec" stroke-width="1.8"/>
<circle cx="925.5" cy="880" r="2.1" fill="#293137"/><circle cx="935.2" cy="880" r="2.1" fill="#293137"/><circle cx="944.9" cy="880" r="2.1" fill="#293137"/>
<rect x="901" y="920" width="2681" height="5" fill="#ebecec"/>
<path d="M912.6 949.4 h15.6 l-7.8 13.6Z" fill="#b7b8b9"/>
<text x="940.80" y="963.00" font-size="24.75" fill="#3f4549" stroke="#3f4549" stroke-width="0.32" textLength="146.5" lengthAdjust="spacing">Data Volume</text>
<circle cx="915.4" cy="1139.3" r="2.2" fill="#e1e2e3"/><circle cx="923.0" cy="1139.3" r="2.2" fill="#e1e2e3"/><circle cx="915.4" cy="1146.3" r="2.2" fill="#e1e2e3"/><circle cx="923.0" cy="1146.3" r="2.2" fill="#e1e2e3"/><circle cx="915.4" cy="1153.3" r="2.2" fill="#e1e2e3"/><circle cx="923.0" cy="1153.3" r="2.2" fill="#e1e2e3"/><circle cx="915.4" cy="1160.3" r="2.2" fill="#e1e2e3"/><circle cx="923.0" cy="1160.3" r="2.2" fill="#e1e2e3"/><circle cx="915.4" cy="1167.3" r="2.2" fill="#e1e2e3"/><circle cx="923.0" cy="1167.3" r="2.2" fill="#e1e2e3"/>
<rect x="912.5" y="1318.7" width="45" height="45.4" rx="9" fill="#fff" stroke="#ebecec" stroke-width="1.8"/>
<circle cx="925.5" cy="1341" r="2.1" fill="#293137"/><circle cx="935.2" cy="1341" r="2.1" fill="#293137"/><circle cx="944.9" cy="1341" r="2.1" fill="#293137"/>
<rect x="901" y="1381" width="2681" height="5" fill="#ebecec"/>
<path d="M912.6 1410.4 h15.6 l-7.8 13.6Z" fill="#b7b8b9"/>
<text x="940.80" y="1424.00" font-size="24.75" fill="#3f4549" stroke="#3f4549" stroke-width="0.32" textLength="170.0" lengthAdjust="spacing">MagDataMode</text>
<circle cx="915.4" cy="1492.3" r="2.2" fill="#e1e2e3"/><circle cx="923.0" cy="1492.3" r="2.2" fill="#e1e2e3"/><circle cx="915.4" cy="1499.3" r="2.2" fill="#e1e2e3"/><circle cx="923.0" cy="1499.3" r="2.2" fill="#e1e2e3"/><circle cx="915.4" cy="1506.3" r="2.2" fill="#e1e2e3"/><circle cx="923.0" cy="1506.3" r="2.2" fill="#e1e2e3"/><circle cx="915.4" cy="1513.3" r="2.2" fill="#e1e2e3"/><circle cx="923.0" cy="1513.3" r="2.2" fill="#e1e2e3"/><circle cx="915.4" cy="1520.3" r="2.2" fill="#e1e2e3"/><circle cx="923.0" cy="1520.3" r="2.2" fill="#e1e2e3"/>
<rect x="912.5" y="1563.7" width="45" height="45.4" rx="9" fill="#fff" stroke="#ebecec" stroke-width="1.8"/>
<circle cx="925.5" cy="1586" r="2.1" fill="#293137"/><circle cx="935.2" cy="1586" r="2.1" fill="#293137"/><circle cx="944.9" cy="1586" r="2.1" fill="#293137"/>
<rect x="901" y="1626" width="2681" height="5" fill="#ebecec"/>
<path d="M912.6 1655.4 h15.6 l-7.8 13.6Z" fill="#b7b8b9"/>
<text x="940.80" y="1669.00" font-size="24.75" fill="#3f4549" stroke="#3f4549" stroke-width="0.32" textLength="156.5" lengthAdjust="spacing">MagDataRate</text>
<circle cx="915.4" cy="1732.3" r="2.2" fill="#e1e2e3"/><circle cx="923.0" cy="1732.3" r="2.2" fill="#e1e2e3"/><circle cx="915.4" cy="1739.3" r="2.2" fill="#e1e2e3"/><circle cx="923.0" cy="1739.3" r="2.2" fill="#e1e2e3"/><circle cx="915.4" cy="1746.3" r="2.2" fill="#e1e2e3"/><circle cx="923.0" cy="1746.3" r="2.2" fill="#e1e2e3"/><circle cx="915.4" cy="1753.3" r="2.2" fill="#e1e2e3"/><circle cx="923.0" cy="1753.3" r="2.2" fill="#e1e2e3"/><circle cx="915.4" cy="1760.3" r="2.2" fill="#e1e2e3"/><circle cx="923.0" cy="1760.3" r="2.2" fill="#e1e2e3"/>
<rect x="912.5" y="1798.7" width="45" height="45.4" rx="9" fill="#fff" stroke="#ebecec" stroke-width="1.8"/>
<circle cx="925.5" cy="1821" r="2.1" fill="#293137"/><circle cx="935.2" cy="1821" r="2.1" fill="#293137"/><circle cx="944.9" cy="1821" r="2.1" fill="#293137"/>
<rect x="901" y="1861" width="2681" height="5" fill="#ebecec"/>
<text x="947.50" y="788.00" font-size="24.75" fill="#283593" stroke="#283593" stroke-width="0.32" textLength="169.5" lengthAdjust="spacing">RecordingRate</text>
<text x="947.50" y="1011.00" font-size="24.75" fill="#283593" stroke="#283593" stroke-width="0.32" textLength="232.0" lengthAdjust="spacing">SSR_Volume_Simple</text>
<text x="947.50" y="1049.30" font-size="24.75" fill="#d32f2f" stroke="#d32f2f" stroke-width="0.32" textLength="254.5" lengthAdjust="spacing">SSR_Volume_Sampled</text>
<text x="947.50" y="1087.60" font-size="24.75" fill="#8547b5" stroke="#8547b5" stroke-width="0.32" textLength="358.0" lengthAdjust="spacing">SSR_Volume_UponRateChange</text>
<text x="947.50" y="1125.90" font-size="24.75" fill="#7cb342" stroke="#7cb342" stroke-width="0.32" textLength="280.5" lengthAdjust="spacing">SSR_Volume_Polynomial</text>
<text x="947.50" y="1472.00" font-size="24.75" fill="#1f2326" stroke="#1f2326" stroke-width="0.32" textLength="170.0" lengthAdjust="spacing">MagDataMode</text>
<text x="947.50" y="1717.00" font-size="24.75" fill="#283593" stroke="#283593" stroke-width="0.32" textLength="156.5" lengthAdjust="spacing">MagDataRate</text>
<text x="1398.30" y="741.00" font-size="24.75" fill="#283593" stroke="#283593" stroke-width="0.32" textLength="26.0" lengthAdjust="spacing" text-anchor="end">14</text>
<text x="1398.30" y="765.00" font-size="24.75" fill="#283593" stroke="#283593" stroke-width="0.32" textLength="26.0" lengthAdjust="spacing" text-anchor="end">12</text>
<text x="1398.30" y="789.00" font-size="24.75" fill="#283593" stroke="#283593" stroke-width="0.32" textLength="26.0" lengthAdjust="spacing" text-anchor="end">10</text>
<text x="1398.30" y="813.00" font-size="24.75" fill="#283593" stroke="#283593" stroke-width="0.32" textLength="14.0" lengthAdjust="spacing" text-anchor="end">8</text>
<text x="1398.30" y="837.00" font-size="24.75" fill="#283593" stroke="#283593" stroke-width="0.32" textLength="14.0" lengthAdjust="spacing" text-anchor="end">6</text>
<text x="1398.30" y="861.00" font-size="24.75" fill="#283593" stroke="#283593" stroke-width="0.32" textLength="14.0" lengthAdjust="spacing" text-anchor="end">4</text>
<text x="1398.30" y="885.00" font-size="24.75" fill="#283593" stroke="#283593" stroke-width="0.32" textLength="14.0" lengthAdjust="spacing" text-anchor="end">2</text>
<text x="1398.30" y="909.00" font-size="24.75" fill="#283593" stroke="#283593" stroke-width="0.32" textLength="36.0" lengthAdjust="spacing" text-anchor="end">0.0</text>
<text x="1398.30" y="1010.95" font-size="24.75" fill="#0c0d0e" stroke="#0c0d0e" stroke-width="0.32" textLength="45.5" lengthAdjust="spacing" text-anchor="end">300</text>
<text x="1398.30" y="1070.72" font-size="24.75" fill="#0c0d0e" stroke="#0c0d0e" stroke-width="0.32" textLength="45.0" lengthAdjust="spacing" text-anchor="end">250</text>
<text x="1398.30" y="1130.50" font-size="24.75" fill="#0c0d0e" stroke="#0c0d0e" stroke-width="0.32" textLength="45.5" lengthAdjust="spacing" text-anchor="end">200</text>
<text x="1398.30" y="1190.27" font-size="24.75" fill="#0c0d0e" stroke="#0c0d0e" stroke-width="0.32" textLength="43.0" lengthAdjust="spacing" text-anchor="end">150</text>
<text x="1398.30" y="1250.05" font-size="24.75" fill="#0c0d0e" stroke="#0c0d0e" stroke-width="0.32" textLength="43.0" lengthAdjust="spacing" text-anchor="end">100</text>
<text x="1398.30" y="1309.82" font-size="24.75" fill="#0c0d0e" stroke="#0c0d0e" stroke-width="0.32" textLength="29.0" lengthAdjust="spacing" text-anchor="end">50</text>
<text x="1398.30" y="1369.60" font-size="24.75" fill="#0c0d0e" stroke="#0c0d0e" stroke-width="0.32" textLength="36.0" lengthAdjust="spacing" text-anchor="end">0.0</text>
<text x="1398.30" y="1657.50" font-size="24.75" fill="#283593" stroke="#283593" stroke-width="0.32" textLength="27.0" lengthAdjust="spacing" text-anchor="end">5k</text>
<text x="1398.30" y="1696.00" font-size="24.75" fill="#283593" stroke="#283593" stroke-width="0.32" textLength="27.0" lengthAdjust="spacing" text-anchor="end">4k</text>
<text x="1398.30" y="1734.50" font-size="24.75" fill="#283593" stroke="#283593" stroke-width="0.32" textLength="27.0" lengthAdjust="spacing" text-anchor="end">3k</text>
<text x="1398.30" y="1773.00" font-size="24.75" fill="#283593" stroke="#283593" stroke-width="0.32" textLength="27.0" lengthAdjust="spacing" text-anchor="end">2k</text>
<text x="1398.30" y="1811.50" font-size="24.75" fill="#283593" stroke="#283593" stroke-width="0.32" textLength="25.0" lengthAdjust="spacing" text-anchor="end">1k</text>
<text x="1398.30" y="1850.00" font-size="24.75" fill="#283593" stroke="#283593" stroke-width="0.32" textLength="36.0" lengthAdjust="spacing" text-anchor="end">0.0</text>
<rect x="1405.5" y="342" width="1.6" height="1530" fill="#e6e7e8"/>
<rect x="1407" y="486" width="3" height="1386" fill="#b8bcbe"/>
<rect x="3511.3" y="486" width="1.7" height="1386" fill="#c3c5c7"/>
<path d="M1408.7 486.9 L1397.46 469.10 A13.3 13.3 0 1 1 1419.94 469.10Z" fill="#545c63"/>
<path d="M1405 456.4 L1415.6 462.6 L1405 468.8Z" fill="#fff"/>
<path d="M3512.3 487.1 L3501.06 469.30 A13.3 13.3 0 1 1 3523.54 469.30Z" fill="#545c63"/>
<rect x="3505.8" y="456" width="5.7" height="13.4" fill="#fff"/><rect x="3513.8" y="456" width="5.7" height="13.4" fill="#fff"/></svg>
<footer>
<div class="b" style="left:0px;top:1872px;width:3582px;height:76px;background:#f8f8f8;"></div>
<div class="b" style="left:0px;top:1872px;width:168px;height:76px;background:#ebecec;"></div>
<span class="t" style="left:39.20px;top:1898.94px;font-size:27px;line-height:32px;color:#1b1d1e;letter-spacing:1.247px;-webkit-text-stroke:0.5px #1b1d1e;">All</span>
<span class="t" style="left:102.70px;top:1898.94px;font-size:27px;line-height:32px;color:#545c63;-webkit-text-stroke:0.35px #545c63;transform:scaleX(1.08);transform-origin:0 50%;">0</span>
<div class="b" style="left:210.2px;top:1897.5px;width:1.8000000000000114px;height:34.0px;background:#c8c9ca;"></div>
<div class="b" style="left:349.8px;top:1895.6px;width:38.0px;height:38.0px;background:#ebecec;border-radius:19px;"></div>
<span class="t" style="left:361.29px;top:1898.94px;font-size:27px;line-height:32px;color:#545c63;-webkit-text-stroke:0.35px #545c63;transform:scaleX(1.08);">0</span>
<div class="b" style="left:521.9px;top:1895.6px;width:38.0px;height:38.0px;background:#ebecec;border-radius:19px;"></div>
<span class="t" style="left:533.39px;top:1898.94px;font-size:27px;line-height:32px;color:#545c63;-webkit-text-stroke:0.35px #545c63;transform:scaleX(1.08);">0</span>
<div class="b" style="left:693.9px;top:1895.6px;width:38.0px;height:38.0px;background:#ebecec;border-radius:19px;"></div>
<span class="t" style="left:705.39px;top:1898.94px;font-size:27px;line-height:32px;color:#545c63;-webkit-text-stroke:0.35px #545c63;transform:scaleX(1.08);">0</span>
<svg style="left:0;top:0" width="3582" height="1948"><path d="M298.8 1903 V1927 H323.5Z" fill="none" stroke="#545c63" stroke-width="4.6" stroke-linejoin="round"/><path d="M304 1904.5 l3 -2.6 M308.6 1909 l3 -2.6 M313.2 1913.6 l3 -2.6 M317.8 1918.2 l3 -2.6" stroke="#545c63" stroke-width="2.2"/><path d="M298.8 1903 L323.5 1927" stroke="#545c63" stroke-width="5.5" stroke-linecap="round"/><rect x="466.5" y="1897.3" width="35.1" height="35" rx="3.5" fill="none" stroke="#545c63" stroke-width="2.6"/><path d="M465.2 1904.8 V1900 a4 4 0 0 1 4 -4 h29.7 a4 4 0 0 1 4 4 V1904.8Z" fill="#545c63"/><rect x="472.3" y="1910.7" width="4.7" height="4.6" rx="1" fill="#545c63"/><rect x="481.9" y="1910.7" width="4.7" height="4.6" rx="1" fill="#545c63"/><rect x="491.6" y="1910.7" width="4.7" height="4.6" rx="1" fill="#545c63"/><rect x="472.3" y="1920.2" width="4.7" height="4.6" rx="1" fill="#545c63"/><rect x="481.9" y="1920.2" width="4.7" height="4.6" rx="1" fill="#545c63"/><rect x="653.1" y="1895.6" width="6.2" height="7" rx="1.6" fill="#545c63" transform="rotate(0 656.2 1914.6)"/><rect x="653.1" y="1895.6" width="6.2" height="7" rx="1.6" fill="#545c63" transform="rotate(30 656.2 1914.6)"/><rect x="653.1" y="1895.6" width="6.2" height="7" rx="1.6" fill="#545c63" transform="rotate(60 656.2 1914.6)"/><rect x="653.1" y="1895.6" width="6.2" height="7" rx="1.6" fill="#545c63" transform="rotate(90 656.2 1914.6)"/><rect x="653.1" y="1895.6" width="6.2" height="7" rx="1.6" fill="#545c63" transform="rotate(120 656.2 1914.6)"/><rect x="653.1" y="1895.6" width="6.2" height="7" rx="1.6" fill="#545c63" transform="rotate(150 656.2 1914.6)"/><rect x="653.1" y="1895.6" width="6.2" height="7" rx="1.6" fill="#545c63" transform="rotate(180 656.2 1914.6)"/><rect x="653.1" y="1895.6" width="6.2" height="7" rx="1.6" fill="#545c63" transform="rotate(210 656.2 1914.6)"/><rect x="653.1" y="1895.6" width="6.2" height="7" rx="1.6" fill="#545c63" transform="rotate(240 656.2 1914.6)"/><rect x="653.1" y="1895.6" width="6.2" height="7" rx="1.6" fill="#545c63" transform="rotate(270 656.2 1914.6)"/><rect x="653.1" y="1895.6" width="6.2" height="7" rx="1.6" fill="#545c63" transform="rotate(300 656.2 1914.6)"/><rect x="653.1" y="1895.6" width="6.2" height="7" rx="1.6" fill="#545c63" transform="rotate(330 656.2 1914.6)"/><circle cx="656.2" cy="1914.6" r="12.6" fill="none" stroke="#545c63" stroke-width="3.6"/><path d="M656.2 1914.6 L668.7 1914.6 M656.2 1914.6 L649.9000000000001 1903.6999999999998 M656.2 1914.6 L649.9000000000001 1925.5" stroke="#545c63" stroke-width="2.8"/><polyline points="3516.8,1913.5 3526.2,1904.5 3535.6,1913.5" fill="none" stroke="#000" stroke-width="5.3" stroke-linecap="round" stroke-linejoin="round"/><path d="M0 1932 Q0.4 1942 3.2 1948 L0 1948Z" fill="#0a0a0a"/></svg>
</footer>
</div></body></html>
